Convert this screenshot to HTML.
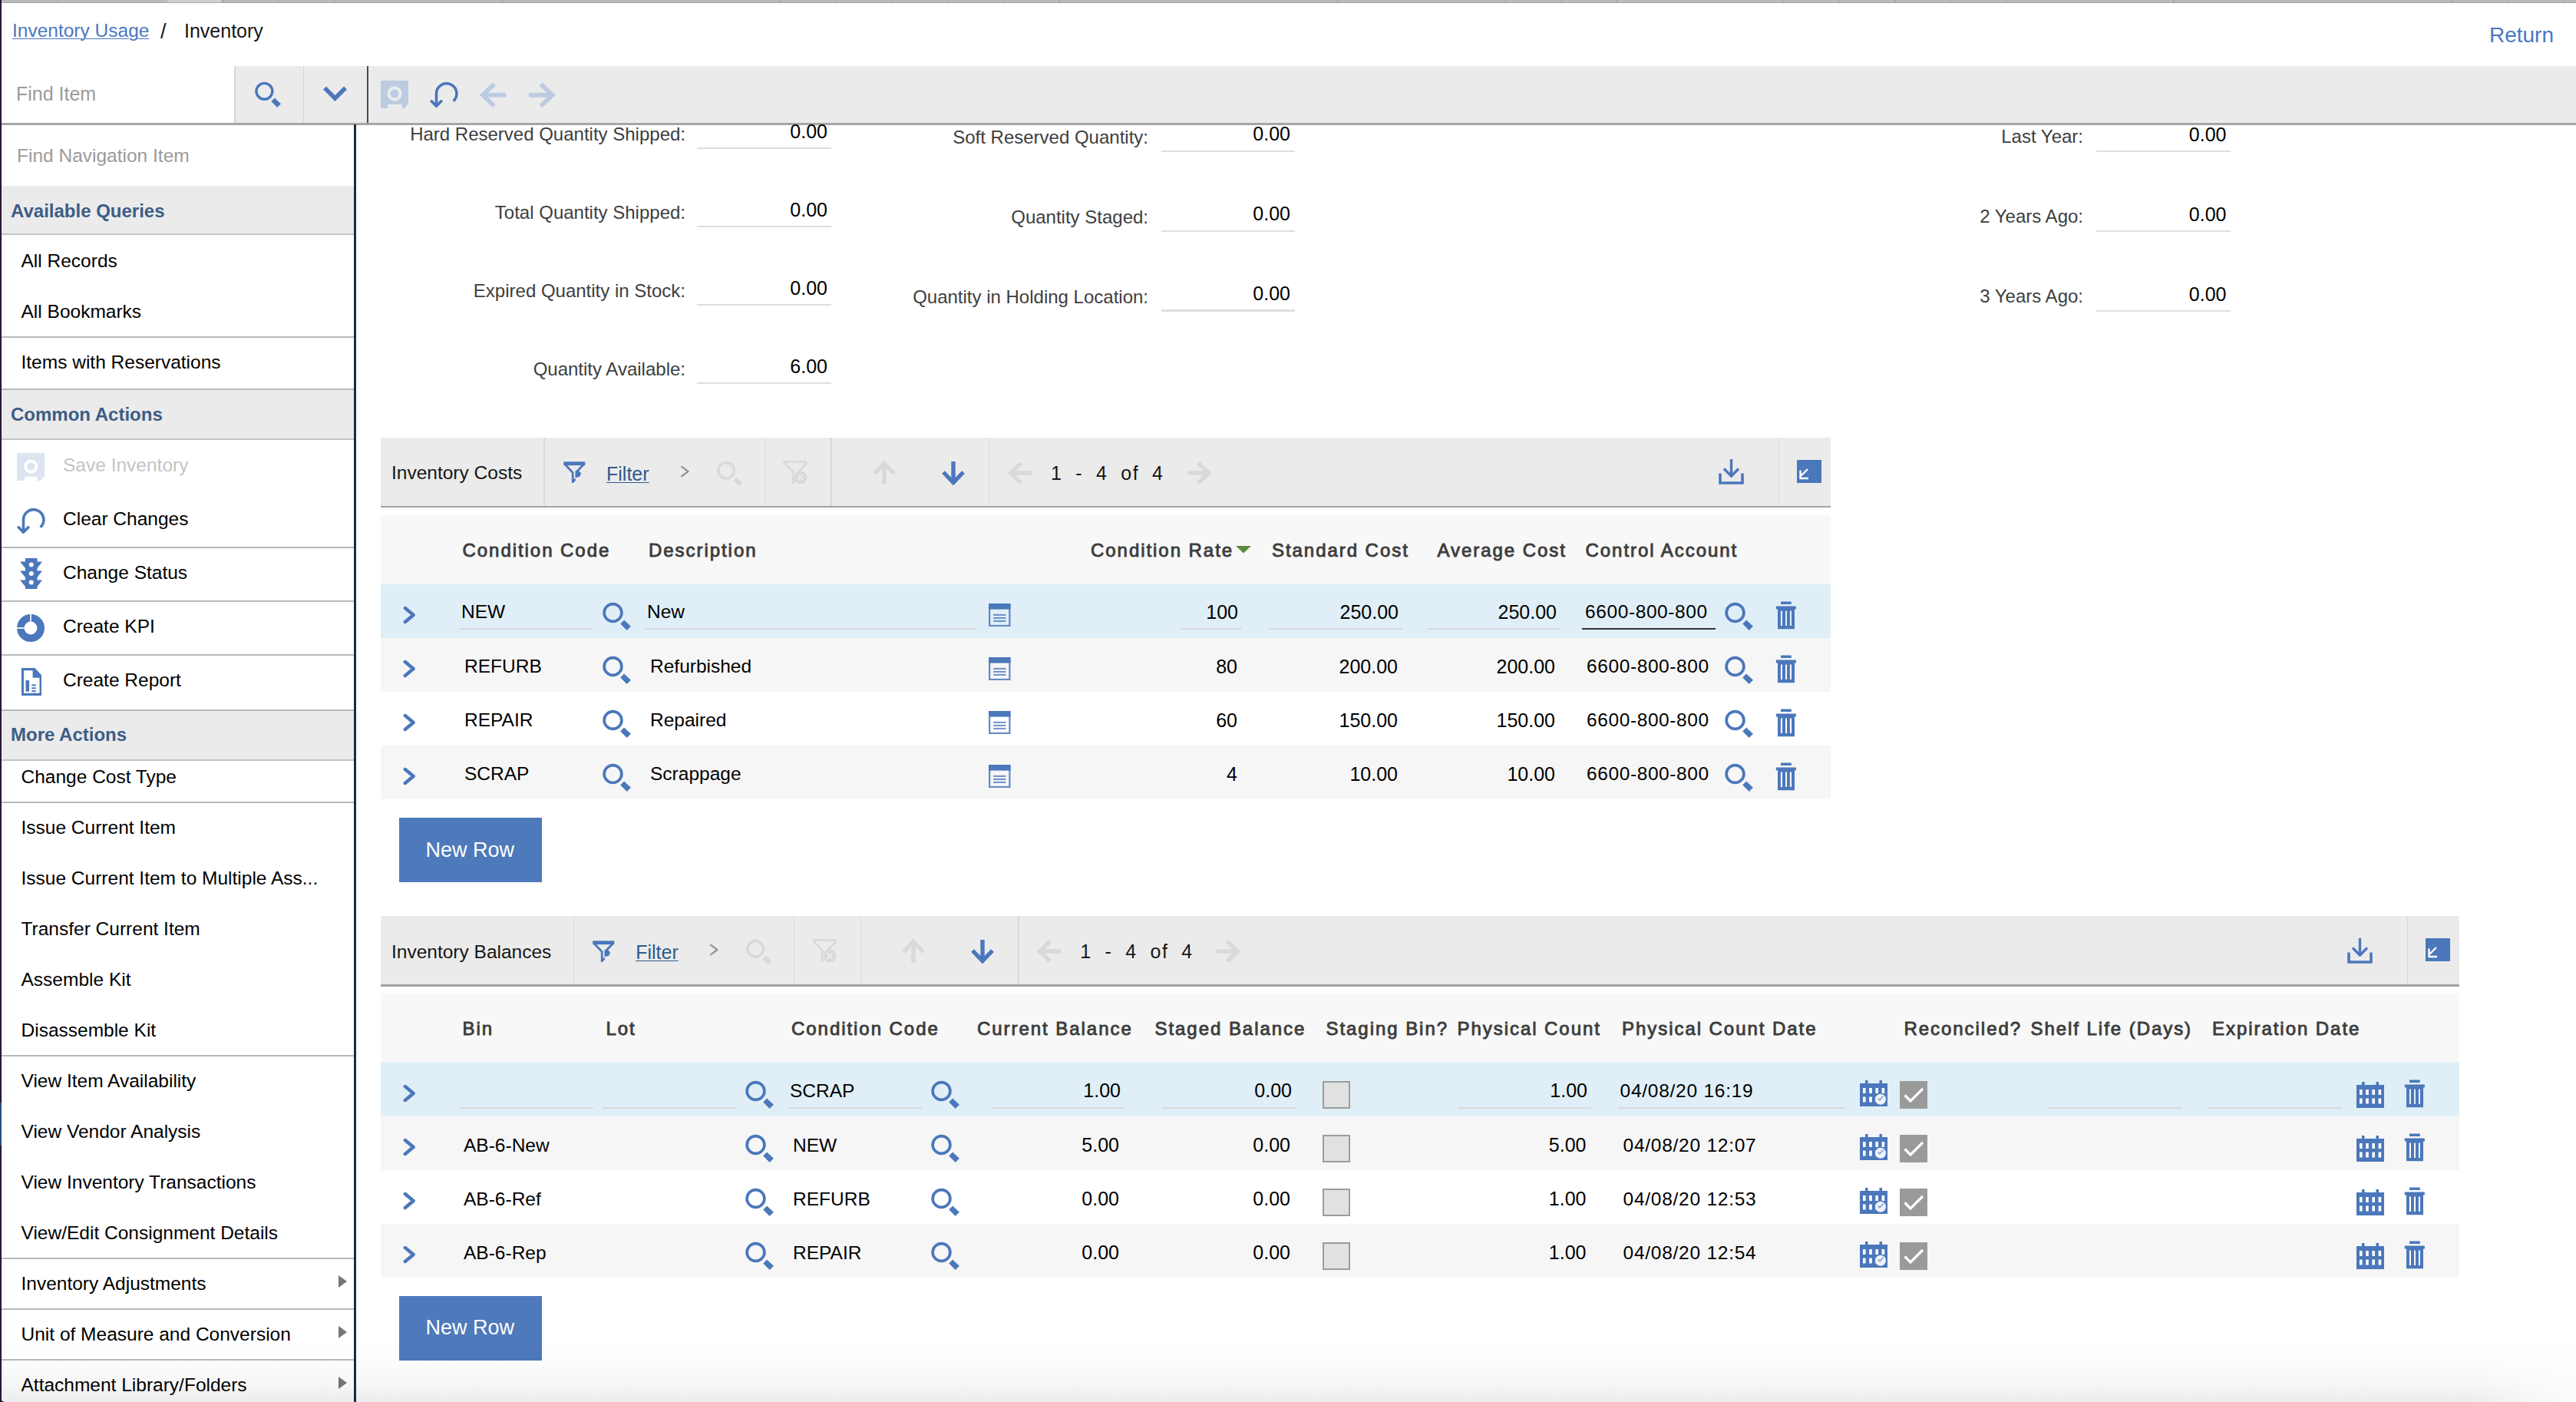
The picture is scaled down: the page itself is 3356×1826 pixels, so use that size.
<!DOCTYPE html><html><head><meta charset="utf-8"><style>
html,body{margin:0;padding:0;width:3356px;height:1826px;overflow:hidden;background:#fff;}
body{position:relative;font-family:"Liberation Sans",sans-serif;}
.t{position:absolute;white-space:nowrap;font-family:"Liberation Sans",sans-serif;}
.r{position:absolute;display:block;}
</style></head><body>
<div class="r" style="left:0.0px;top:0.0px;width:3356.0px;height:3.5px;background:#b9b9b9;"></div>
<div class="r" style="left:0.0px;top:2.6px;width:3356.0px;height:1.2px;background:#a9a9a9;"></div>
<div class="r" style="left:72.6px;top:0.0px;width:1.2px;height:3.0px;background:#a6a6a6;"></div>
<div class="r" style="left:145.2px;top:0.0px;width:1.2px;height:3.0px;background:#a6a6a6;"></div>
<div class="r" style="left:217.8px;top:0.0px;width:1.2px;height:3.0px;background:#a6a6a6;"></div>
<div class="r" style="left:290.4px;top:0.0px;width:1.2px;height:3.0px;background:#a6a6a6;"></div>
<div class="r" style="left:363.0px;top:0.0px;width:1.2px;height:3.0px;background:#a6a6a6;"></div>
<div class="r" style="left:435.6px;top:0.0px;width:1.2px;height:3.0px;background:#a6a6a6;"></div>
<div class="r" style="left:508.2px;top:0.0px;width:1.2px;height:3.0px;background:#a6a6a6;"></div>
<div class="r" style="left:580.8px;top:0.0px;width:1.2px;height:3.0px;background:#a6a6a6;"></div>
<div class="r" style="left:653.4px;top:0.0px;width:1.2px;height:3.0px;background:#a6a6a6;"></div>
<div class="r" style="left:726.0px;top:0.0px;width:1.2px;height:3.0px;background:#a6a6a6;"></div>
<div class="r" style="left:798.6px;top:0.0px;width:1.2px;height:3.0px;background:#a6a6a6;"></div>
<div class="r" style="left:871.2px;top:0.0px;width:1.2px;height:3.0px;background:#a6a6a6;"></div>
<div class="r" style="left:943.8px;top:0.0px;width:1.2px;height:3.0px;background:#a6a6a6;"></div>
<div class="r" style="left:1016.4px;top:0.0px;width:1.2px;height:3.0px;background:#a6a6a6;"></div>
<div class="r" style="left:1089.0px;top:0.0px;width:1.2px;height:3.0px;background:#a6a6a6;"></div>
<div class="r" style="left:1161.6px;top:0.0px;width:1.2px;height:3.0px;background:#a6a6a6;"></div>
<div class="r" style="left:1234.2px;top:0.0px;width:1.2px;height:3.0px;background:#a6a6a6;"></div>
<div class="r" style="left:1306.8px;top:0.0px;width:1.2px;height:3.0px;background:#a6a6a6;"></div>
<div class="r" style="left:1379.4px;top:0.0px;width:1.2px;height:3.0px;background:#a6a6a6;"></div>
<div class="r" style="left:1452.0px;top:0.0px;width:1.2px;height:3.0px;background:#a6a6a6;"></div>
<div class="r" style="left:1524.6px;top:0.0px;width:1.2px;height:3.0px;background:#a6a6a6;"></div>
<div class="r" style="left:1597.2px;top:0.0px;width:1.2px;height:3.0px;background:#a6a6a6;"></div>
<div class="r" style="left:1669.8px;top:0.0px;width:1.2px;height:3.0px;background:#a6a6a6;"></div>
<div class="r" style="left:1742.4px;top:0.0px;width:1.2px;height:3.0px;background:#a6a6a6;"></div>
<div class="r" style="left:1815.0px;top:0.0px;width:1.2px;height:3.0px;background:#a6a6a6;"></div>
<div class="r" style="left:1887.6px;top:0.0px;width:1.2px;height:3.0px;background:#a6a6a6;"></div>
<div class="r" style="left:1960.2px;top:0.0px;width:1.2px;height:3.0px;background:#a6a6a6;"></div>
<div class="r" style="left:2032.8px;top:0.0px;width:1.2px;height:3.0px;background:#a6a6a6;"></div>
<div class="r" style="left:2105.4px;top:0.0px;width:1.2px;height:3.0px;background:#a6a6a6;"></div>
<div class="r" style="left:2178.0px;top:0.0px;width:1.2px;height:3.0px;background:#a6a6a6;"></div>
<div class="r" style="left:2250.6px;top:0.0px;width:1.2px;height:3.0px;background:#a6a6a6;"></div>
<div class="r" style="left:2323.2px;top:0.0px;width:1.2px;height:3.0px;background:#a6a6a6;"></div>
<div class="r" style="left:2395.8px;top:0.0px;width:1.2px;height:3.0px;background:#a6a6a6;"></div>
<div class="r" style="left:2468.4px;top:0.0px;width:1.2px;height:3.0px;background:#a6a6a6;"></div>
<div class="r" style="left:2541.0px;top:0.0px;width:1.2px;height:3.0px;background:#a6a6a6;"></div>
<div class="r" style="left:2613.6px;top:0.0px;width:1.2px;height:3.0px;background:#a6a6a6;"></div>
<div class="r" style="left:2686.2px;top:0.0px;width:1.2px;height:3.0px;background:#a6a6a6;"></div>
<div class="r" style="left:2758.8px;top:0.0px;width:1.2px;height:3.0px;background:#a6a6a6;"></div>
<div class="r" style="left:2831.4px;top:0.0px;width:1.2px;height:3.0px;background:#a6a6a6;"></div>
<div class="r" style="left:2904.0px;top:0.0px;width:1.2px;height:3.0px;background:#a6a6a6;"></div>
<div class="r" style="left:2976.6px;top:0.0px;width:1.2px;height:3.0px;background:#a6a6a6;"></div>
<div class="r" style="left:3049.2px;top:0.0px;width:1.2px;height:3.0px;background:#a6a6a6;"></div>
<div class="r" style="left:3121.8px;top:0.0px;width:1.2px;height:3.0px;background:#a6a6a6;"></div>
<div class="r" style="left:3194.4px;top:0.0px;width:1.2px;height:3.0px;background:#a6a6a6;"></div>
<div class="r" style="left:3267.0px;top:0.0px;width:1.2px;height:3.0px;background:#a6a6a6;"></div>
<div class="r" style="left:3339.6px;top:0.0px;width:1.2px;height:3.0px;background:#a6a6a6;"></div>
<div class="r" style="left:218.0px;top:0.0px;width:70.0px;height:3.0px;background:#cfcfcf;"></div>
<div class="r" style="left:0.0px;top:0.0px;width:2.2px;height:1826.0px;background:#2a1634;"></div>
<div class="r" style="left:0.0px;top:1436.0px;width:2.2px;height:56.0px;background:#2a4d78;"></div>
<div class="t" style="top:28.3px;font-size:24.5px;line-height:24.5px;color:#4a77bf;left:16.0px;text-decoration:underline;text-underline-offset:2px;text-decoration-thickness:1.2px;">Inventory Usage</div>
<div class="t" style="top:27.6px;font-size:27px;line-height:27px;color:#161616;left:209.0px;">/</div>
<div class="t" style="top:27.8px;font-size:25px;line-height:25px;color:#161616;left:240.0px;">Inventory</div>
<div class="t" style="top:32.3px;font-size:28px;line-height:28px;color:#4a77bf;right:29.0px;">Return</div>
<div class="r" style="left:305.0px;top:86.0px;width:3051.0px;height:74.5px;background:#ebebeb;"></div>
<div class="r" style="left:2.2px;top:160.0px;width:3353.8px;height:2.5px;background:#a6a6a6;"></div>
<div class="r" style="left:305.0px;top:86.0px;width:1.5px;height:74.0px;background:#d6d6d6;"></div>
<div class="r" style="left:394.5px;top:86.0px;width:1.3px;height:74.0px;background:#d6d6d6;"></div>
<div class="r" style="left:477.8px;top:86.0px;width:2.4px;height:74.0px;background:#4a4a4a;"></div>
<div class="t" style="top:109.8px;font-size:25px;line-height:25px;color:#9b9b9b;left:21.0px;">Find Item</div>
<svg class="r" style="left:331.5px;top:106.3px;" width="34.9" height="34.9" viewBox="0 0 38 38" preserveAspectRatio="none"><circle cx="13.5" cy="14" r="11.4" fill="none" stroke="#4b77bb" stroke-width="3.7"/><path d="M23.7 28.4 L28.1 23.9 L36.5 31.8 L31.7 36.6 Z" fill="#4b77bb" stroke="#4b77bb" stroke-width="0.8" stroke-linejoin="round"/></svg>
<svg class="r" style="left:420.0px;top:111.0px;" width="33.0" height="22.0" viewBox="0 0 33 22" preserveAspectRatio="none"><path d="M3 3.5 L16.5 17 L30 3.5" fill="none" stroke="#4b77bb" stroke-width="5.5"/></svg>
<svg class="r" style="left:496.0px;top:105.0px;" width="36.0" height="36.0" viewBox="0 0 36 36" preserveAspectRatio="none"><path d="M0 0 H36 V30 L30.5 36 H28 V31 H9 V36 H0 Z" fill="#bccbe0"/><circle cx="18" cy="17" r="7.5" fill="none" stroke="#ebebeb" stroke-width="4"/></svg>
<svg class="r" style="left:559.6px;top:106.5px;" width="38.0" height="34.0" viewBox="0 0 38 34" preserveAspectRatio="none"><path d="M30.6 24.7 A13.2 13.2 0 1 0 8.5 15 V31" fill="none" stroke="#4b77bb" stroke-width="3.6"/><path d="M2.2 24.8 L8.5 31.2 L14.8 24.8" fill="none" stroke="#4b77bb" stroke-width="3.6" stroke-linejoin="round" stroke-linecap="round"/></svg>
<svg class="r" style="left:624.5px;top:105.5px;" width="35.5" height="35.5" viewBox="0 0 32 32" preserveAspectRatio="none"><g transform="rotate(90 16 16)"><rect x="13.4" y="1" width="5.2" height="26" fill="#bccbe0"/><path d="M3 15 L16 28.5 L29 15" fill="none" stroke="#bccbe0" stroke-width="5.2"/></g></svg>
<svg class="r" style="left:688.0px;top:105.5px;" width="35.5" height="35.5" viewBox="0 0 32 32" preserveAspectRatio="none"><g transform="rotate(-90 16 16)"><rect x="13.4" y="1" width="5.2" height="26" fill="#bccbe0"/><path d="M3 15 L16 28.5 L29 15" fill="none" stroke="#bccbe0" stroke-width="5.2"/></g></svg>
<div class="r" style="left:460.8px;top:162.0px;width:3.0px;height:1664.0px;background:#1d2a44;"></div>
<div class="t" style="top:191.3px;font-size:24.5px;line-height:24.5px;color:#9b9b9b;left:22.0px;">Find Navigation Item</div>
<div class="r" style="left:2.2px;top:242.0px;width:458.6px;height:62.0px;background:#ebebeb;"></div>
<div class="r" style="left:2.2px;top:304.0px;width:458.6px;height:2.0px;background:#c4c4c4;"></div>
<div class="t" style="top:262.7px;font-size:24px;line-height:24px;color:#3c5d86;font-weight:700;left:14.0px;">Available Queries</div>
<div class="t" style="top:328.3px;font-size:24.5px;line-height:24.5px;color:#000;left:27.5px;">All Records</div>
<div class="t" style="top:394.3px;font-size:24.5px;line-height:24.5px;color:#000;left:27.5px;">All Bookmarks</div>
<div class="r" style="left:2.2px;top:438.0px;width:458.6px;height:2.0px;background:#b9b9b9;"></div>
<div class="t" style="top:460.3px;font-size:24.5px;line-height:24.5px;color:#000;left:27.5px;">Items with Reservations</div>
<div class="r" style="left:2.2px;top:505.5px;width:458.6px;height:2.0px;background:#b9b9b9;"></div>
<div class="r" style="left:2.2px;top:507.5px;width:458.6px;height:63.0px;background:#ebebeb;"></div>
<div class="r" style="left:2.2px;top:570.5px;width:458.6px;height:2.0px;background:#c4c4c4;"></div>
<div class="t" style="top:527.7px;font-size:24px;line-height:24px;color:#3c5d86;font-weight:700;left:14.0px;">Common Actions</div>
<div class="t" style="top:594.3px;font-size:24.5px;line-height:24.5px;color:#c4c4c4;left:82.0px;">Save Inventory</div>
<div class="t" style="top:664.3px;font-size:24.5px;line-height:24.5px;color:#000;left:82.0px;">Clear Changes</div>
<div class="r" style="left:2.2px;top:712.0px;width:458.6px;height:2.0px;background:#b9b9b9;"></div>
<div class="t" style="top:734.3px;font-size:24.5px;line-height:24.5px;color:#000;left:82.0px;">Change Status</div>
<div class="r" style="left:2.2px;top:782.0px;width:458.6px;height:2.0px;background:#b9b9b9;"></div>
<div class="t" style="top:803.8px;font-size:24.5px;line-height:24.5px;color:#000;left:82.0px;">Create KPI</div>
<div class="r" style="left:2.2px;top:852.0px;width:458.6px;height:2.0px;background:#b9b9b9;"></div>
<div class="t" style="top:874.3px;font-size:24.5px;line-height:24.5px;color:#000;left:82.0px;">Create Report</div>
<div class="r" style="left:2.2px;top:923.5px;width:458.6px;height:2.0px;background:#b9b9b9;"></div>
<div class="r" style="left:2.2px;top:925.5px;width:458.6px;height:63.0px;background:#ebebeb;"></div>
<div class="r" style="left:2.2px;top:988.5px;width:458.6px;height:2.0px;background:#c4c4c4;"></div>
<div class="t" style="top:945.2px;font-size:24px;line-height:24px;color:#3c5d86;font-weight:700;left:14.0px;">More Actions</div>
<div class="t" style="top:1000.3px;font-size:24.5px;line-height:24.5px;color:#000;left:27.5px;">Change Cost Type</div>
<div class="r" style="left:2.2px;top:1044.0px;width:458.6px;height:2.0px;background:#b9b9b9;"></div>
<div class="t" style="top:1066.3px;font-size:24.5px;line-height:24.5px;color:#000;left:27.5px;">Issue Current Item</div>
<div class="t" style="top:1132.2px;font-size:24.5px;line-height:24.5px;color:#000;left:27.5px;">Issue Current Item to Multiple Ass...</div>
<div class="t" style="top:1198.1px;font-size:24.5px;line-height:24.5px;color:#000;left:27.5px;">Transfer Current Item</div>
<div class="t" style="top:1264.0px;font-size:24.5px;line-height:24.5px;color:#000;left:27.5px;">Assemble Kit</div>
<div class="t" style="top:1329.9px;font-size:24.5px;line-height:24.5px;color:#000;left:27.5px;">Disassemble Kit</div>
<div class="r" style="left:2.2px;top:1374.0px;width:458.6px;height:2.0px;background:#b9b9b9;"></div>
<div class="t" style="top:1396.3px;font-size:24.5px;line-height:24.5px;color:#000;left:27.5px;">View Item Availability</div>
<div class="t" style="top:1462.3px;font-size:24.5px;line-height:24.5px;color:#000;left:27.5px;">View Vendor Analysis</div>
<div class="t" style="top:1528.3px;font-size:24.5px;line-height:24.5px;color:#000;left:27.5px;">View Inventory Transactions</div>
<div class="t" style="top:1594.3px;font-size:24.5px;line-height:24.5px;color:#000;left:27.5px;">View/Edit Consignment Details</div>
<div class="r" style="left:2.2px;top:1637.7px;width:458.6px;height:2.0px;background:#b9b9b9;"></div>
<div class="t" style="top:1660.3px;font-size:24.5px;line-height:24.5px;color:#000;left:27.5px;">Inventory Adjustments</div>
<div class="r" style="left:2.2px;top:1704.0px;width:458.6px;height:2.0px;background:#b9b9b9;"></div>
<div class="t" style="top:1726.3px;font-size:24.5px;line-height:24.5px;color:#000;left:27.5px;">Unit of Measure and Conversion</div>
<div class="r" style="left:2.2px;top:1769.5px;width:458.6px;height:2.0px;background:#b9b9b9;"></div>
<div class="t" style="top:1791.9px;font-size:24.5px;line-height:24.5px;color:#000;left:27.5px;">Attachment Library/Folders</div>
<svg class="r" style="left:441.0px;top:1661.0px;" width="11.0" height="16.0" viewBox="0 0 11 16" preserveAspectRatio="none"><path d="M0 0 L11 8 L0 16 Z" fill="#777"/></svg>
<svg class="r" style="left:441.0px;top:1727.0px;" width="11.0" height="16.0" viewBox="0 0 11 16" preserveAspectRatio="none"><path d="M0 0 L11 8 L0 16 Z" fill="#777"/></svg>
<svg class="r" style="left:441.0px;top:1792.6px;" width="11.0" height="16.0" viewBox="0 0 11 16" preserveAspectRatio="none"><path d="M0 0 L11 8 L0 16 Z" fill="#777"/></svg>
<svg class="r" style="left:21.5px;top:590.0px;" width="36.5" height="36.0" viewBox="0 0 36 36" preserveAspectRatio="none"><path d="M0 0 H36 V30 L30.5 36 H26 V31 H10 V36 H0 Z" fill="#dce5f1"/><circle cx="18" cy="17.5" r="7" fill="none" stroke="#fff" stroke-width="4"/></svg>
<svg class="r" style="left:21.5px;top:661.5px;" width="38.0" height="34.0" viewBox="0 0 38 34" preserveAspectRatio="none"><path d="M30.6 24.7 A13.2 13.2 0 1 0 8.5 15 V31" fill="none" stroke="#4b77bb" stroke-width="3.6"/><path d="M2.2 24.8 L8.5 31.2 L14.8 24.8" fill="none" stroke="#4b77bb" stroke-width="3.6" stroke-linejoin="round" stroke-linecap="round"/></svg>
<svg class="r" style="left:25.5px;top:727.0px;" width="29.0" height="40.0" viewBox="0 0 29 40" preserveAspectRatio="none"><rect x="7" y="0" width="15.5" height="40" fill="#4b77bb"/><path d="M0 4.5 H8 V13 H7 Z M29 4.5 H21.5 V13 H22.5 Z M0 16.5 H8 V25 H7 Z M29 16.5 H21.5 V25 H22.5 Z M0 28.5 H8 V37 H7 Z M29 28.5 H21.5 V37 H22.5 Z" fill="#4b77bb"/><circle cx="14.75" cy="8.5" r="3" fill="#fff"/><circle cx="14.75" cy="20" r="3" fill="#fff"/><circle cx="14.75" cy="31.5" r="3" fill="#fff"/></svg>
<svg class="r" style="left:21.5px;top:800.0px;" width="36.0" height="36.0" viewBox="0 0 36 36" preserveAspectRatio="none"><circle cx="18" cy="18" r="13.2" fill="none" stroke="#4b77bb" stroke-width="9.6"/><rect x="17" y="0" width="2" height="10" fill="#dfe7f2"/><rect x="0" y="17" width="10" height="2" fill="#dfe7f2"/></svg>
<svg class="r" style="left:27.9px;top:869.7px;" width="26.5" height="36.0" viewBox="0 0 29 37" preserveAspectRatio="none"><path d="M1.5 1.5 H18 L27.5 11 V35.5 H1.5 Z" fill="none" stroke="#4b77bb" stroke-width="3.5"/><path d="M16 1.5 V13 H27.5 L16 1.5 Z" fill="#4b77bb"/><rect x="6" y="16.5" width="5" height="15" fill="#4b77bb"/><rect x="14.5" y="22" width="6" height="2" fill="#4b77bb"/><rect x="14.5" y="26" width="6" height="2" fill="#4b77bb"/><rect x="14.5" y="30" width="6" height="2" fill="#4b77bb"/></svg>
<div class="t" style="top:163.1px;font-size:24px;line-height:24px;color:#3e3e3e;right:2463.0px;">Hard Reserved Quantity Shipped:</div>
<div class="t" style="top:159.3px;font-size:25px;line-height:25px;color:#000;right:2278.0px;">0.00</div>
<div class="r" style="left:908.0px;top:192.0px;width:175.0px;height:2.2px;background:#dedede;"></div>
<div class="t" style="top:265.0px;font-size:24px;line-height:24px;color:#3e3e3e;right:2463.0px;">Total Quantity Shipped:</div>
<div class="t" style="top:261.2px;font-size:25px;line-height:25px;color:#000;right:2278.0px;">0.00</div>
<div class="r" style="left:908.0px;top:293.9px;width:175.0px;height:2.2px;background:#dedede;"></div>
<div class="t" style="top:366.9px;font-size:24px;line-height:24px;color:#3e3e3e;right:2463.0px;">Expired Quantity in Stock:</div>
<div class="t" style="top:363.1px;font-size:25px;line-height:25px;color:#000;right:2278.0px;">0.00</div>
<div class="r" style="left:908.0px;top:395.8px;width:175.0px;height:2.2px;background:#dedede;"></div>
<div class="t" style="top:468.8px;font-size:24px;line-height:24px;color:#3e3e3e;right:2463.0px;">Quantity Available:</div>
<div class="t" style="top:465.0px;font-size:25px;line-height:25px;color:#000;right:2278.0px;">6.00</div>
<div class="r" style="left:908.0px;top:497.7px;width:175.0px;height:2.2px;background:#dedede;"></div>
<div class="t" style="top:166.7px;font-size:24px;line-height:24px;color:#3e3e3e;right:1860.0px;">Soft Reserved Quantity:</div>
<div class="t" style="top:162.3px;font-size:25px;line-height:25px;color:#000;right:1675.0px;">0.00</div>
<div class="r" style="left:1513.0px;top:195.6px;width:174.0px;height:2.2px;background:#dedede;"></div>
<div class="t" style="top:270.6px;font-size:24px;line-height:24px;color:#3e3e3e;right:1860.0px;">Quantity Staged:</div>
<div class="t" style="top:266.2px;font-size:25px;line-height:25px;color:#000;right:1675.0px;">0.00</div>
<div class="r" style="left:1513.0px;top:299.5px;width:174.0px;height:2.2px;background:#dedede;"></div>
<div class="t" style="top:374.5px;font-size:24px;line-height:24px;color:#3e3e3e;right:1860.0px;">Quantity in Holding Location:</div>
<div class="t" style="top:370.1px;font-size:25px;line-height:25px;color:#000;right:1675.0px;">0.00</div>
<div class="r" style="left:1513.0px;top:403.4px;width:174.0px;height:2.2px;background:#dedede;"></div>
<div class="t" style="top:166.3px;font-size:24px;line-height:24px;color:#3e3e3e;right:642.0px;">Last Year:</div>
<div class="t" style="top:162.8px;font-size:25px;line-height:25px;color:#000;right:455.5px;">0.00</div>
<div class="r" style="left:2731.0px;top:195.8px;width:175.0px;height:2.2px;background:#dedede;"></div>
<div class="t" style="top:270.3px;font-size:24px;line-height:24px;color:#3e3e3e;right:642.0px;">2 Years Ago:</div>
<div class="t" style="top:266.8px;font-size:25px;line-height:25px;color:#000;right:455.5px;">0.00</div>
<div class="r" style="left:2731.0px;top:299.8px;width:175.0px;height:2.2px;background:#dedede;"></div>
<div class="t" style="top:374.3px;font-size:24px;line-height:24px;color:#3e3e3e;right:642.0px;">3 Years Ago:</div>
<div class="t" style="top:370.8px;font-size:25px;line-height:25px;color:#000;right:455.5px;">0.00</div>
<div class="r" style="left:2731.0px;top:403.8px;width:175.0px;height:2.2px;background:#dedede;"></div>
<div class="r" style="left:496.0px;top:569.8px;width:1889.0px;height:90.0px;background:#ebebeb;"></div>
<div class="r" style="left:496.0px;top:658.8px;width:1889.0px;height:2.5px;background:#a3a3a3;"></div>
<div class="t" style="top:604.3px;font-size:24.5px;line-height:24.5px;color:#161616;left:510.0px;">Inventory Costs</div>
<div class="r" style="left:708.4px;top:569.8px;width:1.2px;height:89.0px;background:#d9d9d9;"></div>
<svg class="r" style="left:734.0px;top:601.3px;" width="29.0" height="28.0" viewBox="0 0 29 28" preserveAspectRatio="none"><rect x="0.3" y="0.3" width="28" height="4.8" fill="#4b77bb"/><path d="M1.8 3.5 L12.2 14.5 V26.8 L15.5 23 M26.8 3.5 L17.2 13.5" fill="none" stroke="#4b77bb" stroke-width="2.7"/><path d="M15.5 12.3 H20 L23 15.3 L21.5 19.5 L15.5 21.5 Z" fill="#4b77bb"/></svg>
<div class="t" style="top:604.6px;font-size:25px;line-height:25px;color:#2f5b8c;left:790.0px;text-decoration:underline;text-underline-offset:1.8px;text-decoration-thickness:1.2px;">Filter</div>
<svg class="r" style="left:886.0px;top:605.8px;" width="13.0" height="16.0" viewBox="0 0 13 16" preserveAspectRatio="none"><path d="M2.2 1.8 L10.5 8 L2.2 14.2" fill="none" stroke="#96968a" stroke-width="2.3" stroke-linecap="round" stroke-linejoin="round"/></svg>
<svg class="r" style="left:933.5px;top:599.8px;" width="34.4" height="34.4" viewBox="0 0 38 38" preserveAspectRatio="none"><circle cx="13.5" cy="14" r="11.4" fill="none" stroke="#d9d9d9" stroke-width="3.7"/><path d="M23.7 28.4 L28.1 23.9 L36.5 31.8 L31.7 36.6 Z" fill="#d9d9d9" stroke="#d9d9d9" stroke-width="0.8" stroke-linejoin="round"/></svg>
<div class="r" style="left:996.0px;top:569.8px;width:1.2px;height:89.0px;background:#d9d9d9;"></div>
<svg class="r" style="left:1020.0px;top:599.8px;" width="32.0" height="31.0" viewBox="0 0 32 31" preserveAspectRatio="none"><path d="M1 1.5 H30 V4.5 L20.5 14 V17 L13 29 V14 L3 4.5 Z" fill="none" stroke="#d9d9d9" stroke-width="2.6"/><circle cx="23" cy="22" r="8.5" fill="#d9d9d9"/><path d="M19.5 18.5 L26.5 25.5 M26.5 18.5 L19.5 25.5" stroke="#ececec" stroke-width="2"/></svg>
<div class="r" style="left:1082.4px;top:569.8px;width:1.2px;height:89.0px;background:#d9d9d9;"></div>
<svg class="r" style="left:1136.0px;top:599.8px;" width="32.0" height="32.0" viewBox="0 0 32 32" preserveAspectRatio="none"><g transform="rotate(180 16 16)"><rect x="13.3" y="1" width="5.4" height="26" fill="#d9d9d9"/><path d="M3 15 L16 28.5 L29 15" fill="none" stroke="#d9d9d9" stroke-width="5.4"/></g></svg>
<svg class="r" style="left:1226.0px;top:599.8px;" width="32.0" height="32.0" viewBox="0 0 32 32" preserveAspectRatio="none"><g transform="rotate(0 16 16)"><rect x="13.3" y="1" width="5.4" height="26" fill="#4b77bb"/><path d="M3 15 L16 28.5 L29 15" fill="none" stroke="#4b77bb" stroke-width="5.4"/></g></svg>
<div class="r" style="left:1288.2px;top:569.8px;width:1.2px;height:89.0px;background:#d9d9d9;"></div>
<svg class="r" style="left:1312.5px;top:599.8px;" width="32.0" height="32.0" viewBox="0 0 32 32" preserveAspectRatio="none"><g transform="rotate(90 16 16)"><rect x="13.3" y="1" width="5.4" height="26" fill="#d9d9d9"/><path d="M3 15 L16 28.5 L29 15" fill="none" stroke="#d9d9d9" stroke-width="5.4"/></g></svg>
<div class="t" style="top:604.1px;font-size:25px;line-height:25px;color:#161616;letter-spacing:1.5px;left:1369.0px;">1&nbsp;&nbsp;-&nbsp;&nbsp;4&nbsp;&nbsp;of&nbsp;&nbsp;4</div>
<svg class="r" style="left:1546.0px;top:599.8px;" width="32.0" height="32.0" viewBox="0 0 32 32" preserveAspectRatio="none"><g transform="rotate(-90 16 16)"><rect x="13.3" y="1" width="5.4" height="26" fill="#d9d9d9"/><path d="M3 15 L16 28.5 L29 15" fill="none" stroke="#d9d9d9" stroke-width="5.4"/></g></svg>
<svg class="r" style="left:2238.5px;top:598.4px;" width="33.0" height="33.0" viewBox="0 0 33 33" preserveAspectRatio="none"><rect x="14.8" y="0" width="3.4" height="21" fill="#4b77bb"/><path d="M7 12.5 L16.5 22 L26 12.5" fill="none" stroke="#4b77bb" stroke-width="3.4"/><path d="M2 18.5 V31 H31 V18.5" fill="none" stroke="#4b77bb" stroke-width="3.6"/></svg>
<div class="r" style="left:2317.1px;top:569.8px;width:1.2px;height:89.0px;background:#d9d9d9;"></div>
<svg class="r" style="left:2340.8px;top:599.0px;" width="32.0" height="30.0" viewBox="0 0 32 30" preserveAspectRatio="none"><rect x="0" y="0" width="32" height="30" fill="#4b77bb"/><path d="M14 12 L5.5 20.5 M4.5 13.5 V24 H15" fill="none" stroke="#fff" stroke-width="2.4"/></svg>
<div class="r" style="left:496.0px;top:670.6px;width:1889.0px;height:90.2px;background:#f8f8f8;"></div>
<div class="t" style="top:705.1px;font-size:24px;line-height:24px;color:#3d3d3d;letter-spacing:1.95px;left:602.5px;-webkit-text-stroke:0.9px #3d3d3d;">Condition Code</div>
<div class="t" style="top:705.1px;font-size:24px;line-height:24px;color:#3d3d3d;letter-spacing:1.95px;left:845.0px;-webkit-text-stroke:0.9px #3d3d3d;">Description</div>
<div class="t" style="top:705.1px;font-size:24px;line-height:24px;color:#3d3d3d;letter-spacing:1.95px;left:1421.0px;-webkit-text-stroke:0.9px #3d3d3d;">Condition Rate</div>
<svg class="r" style="left:1609.5px;top:711.4px;" width="20.0" height="9.5" viewBox="0 0 20 9.5" preserveAspectRatio="none"><path d="M0 0 H20 L10 9.5 Z" fill="#5b8c3e"/></svg>
<div class="t" style="top:705.1px;font-size:24px;line-height:24px;color:#3d3d3d;letter-spacing:1.95px;left:1657.0px;-webkit-text-stroke:0.9px #3d3d3d;">Standard Cost</div>
<div class="t" style="top:705.1px;font-size:24px;line-height:24px;color:#3d3d3d;letter-spacing:1.95px;left:1872.5px;-webkit-text-stroke:0.9px #3d3d3d;">Average Cost</div>
<div class="t" style="top:705.1px;font-size:24px;line-height:24px;color:#3d3d3d;letter-spacing:1.95px;left:2065.5px;-webkit-text-stroke:0.9px #3d3d3d;">Control Account</div>
<div class="r" style="left:496.0px;top:760.8px;width:1889.0px;height:70.1px;background:#e0eff7;"></div>
<svg class="r" style="left:525.0px;top:789.3px;" width="17.0" height="24.0" viewBox="0 0 17 24" preserveAspectRatio="none"><path d="M2.8 3 L13.6 12 L2.8 21" fill="none" stroke="#4b77bb" stroke-width="4.4" stroke-linecap="round" stroke-linejoin="round"/></svg>
<div class="t" style="top:785.1px;font-size:24.5px;line-height:24.5px;color:#000;left:601.0px;">NEW</div>
<svg class="r" style="left:784.5px;top:783.8px;" width="38.0" height="38.0" viewBox="0 0 38 38" preserveAspectRatio="none"><circle cx="13.5" cy="14" r="11.4" fill="none" stroke="#4b77bb" stroke-width="3.7"/><path d="M23.7 28.4 L28.1 23.9 L36.5 31.8 L31.7 36.6 Z" fill="#4b77bb" stroke="#4b77bb" stroke-width="0.8" stroke-linejoin="round"/></svg>
<div class="t" style="top:785.1px;font-size:24.5px;line-height:24.5px;color:#000;left:843.0px;">New</div>
<svg class="r" style="left:1288.0px;top:786.3px;" width="28.5" height="30.0" viewBox="0 0 28 30" preserveAspectRatio="none"><rect x="1.1" y="1" width="25.8" height="28" fill="none" stroke="#4b77bb" stroke-opacity="0.85" stroke-width="2.2"/><rect x="0" y="0" width="28" height="7.6" fill="#4b77bb"/><rect x="6" y="13.9" width="16" height="2" fill="#4b77bb" fill-opacity="0.8"/><rect x="6" y="17.9" width="16" height="2" fill="#4b77bb" fill-opacity="0.8"/><rect x="6" y="21.9" width="16" height="2" fill="#4b77bb" fill-opacity="0.8"/></svg>
<div class="t" style="top:784.6px;font-size:25px;line-height:25px;color:#000;right:1743.0px;">100</div>
<div class="t" style="top:784.6px;font-size:25px;line-height:25px;color:#000;right:1534.0px;">250.00</div>
<div class="t" style="top:784.6px;font-size:25px;line-height:25px;color:#000;right:1328.0px;">250.00</div>
<div class="t" style="top:785.1px;font-size:24.5px;line-height:24.5px;color:#000;letter-spacing:0.6px;left:2065.0px;">6600-800-800</div>
<svg class="r" style="left:2246.5px;top:783.8px;" width="38.0" height="38.0" viewBox="0 0 38 38" preserveAspectRatio="none"><circle cx="13.5" cy="14" r="11.4" fill="none" stroke="#4b77bb" stroke-width="3.7"/><path d="M23.7 28.4 L28.1 23.9 L36.5 31.8 L31.7 36.6 Z" fill="#4b77bb" stroke="#4b77bb" stroke-width="0.8" stroke-linejoin="round"/></svg>
<svg class="r" style="left:2312.5px;top:783.3px;" width="28.0" height="37.0" viewBox="0 0 28 37" preserveAspectRatio="none"><rect x="7" y="0.5" width="13.8" height="3.6" rx="0.6" fill="#4b77bb"/><rect x="0.8" y="6.6" width="26.1" height="3.8" rx="0.6" fill="#4b77bb"/><path fill-rule="evenodd" d="M3 10 H25 V36.2 H3 Z M6.9 12.5 V32.1 H9 V12.5 Z M13 12.5 V32.1 H15 V12.5 Z M18.9 12.5 V32.1 H21 V12.5 Z" fill="#4b77bb"/></svg>
<div class="r" style="left:598.0px;top:817.6px;width:175.0px;height:2.3px;background:#d9d9d9;"></div>
<div class="r" style="left:840.0px;top:817.6px;width:431.0px;height:2.3px;background:#d9d9d9;"></div>
<div class="r" style="left:1539.0px;top:817.6px;width:79.0px;height:2.3px;background:#d9d9d9;"></div>
<div class="r" style="left:1653.0px;top:817.6px;width:174.0px;height:2.3px;background:#d9d9d9;"></div>
<div class="r" style="left:1859.0px;top:817.6px;width:174.0px;height:2.3px;background:#d9d9d9;"></div>
<div class="r" style="left:2061.0px;top:817.6px;width:174.0px;height:2.0px;background:#333;"></div>
<div class="r" style="left:496.0px;top:830.8px;width:1889.0px;height:70.1px;background:#f6f6f6;"></div>
<svg class="r" style="left:525.0px;top:859.3px;" width="17.0" height="24.0" viewBox="0 0 17 24" preserveAspectRatio="none"><path d="M2.8 3 L13.6 12 L2.8 21" fill="none" stroke="#4b77bb" stroke-width="4.4" stroke-linecap="round" stroke-linejoin="round"/></svg>
<div class="t" style="top:856.3px;font-size:24.5px;line-height:24.5px;color:#000;left:605.0px;">REFURB</div>
<svg class="r" style="left:784.5px;top:853.8px;" width="38.0" height="38.0" viewBox="0 0 38 38" preserveAspectRatio="none"><circle cx="13.5" cy="14" r="11.4" fill="none" stroke="#4b77bb" stroke-width="3.7"/><path d="M23.7 28.4 L28.1 23.9 L36.5 31.8 L31.7 36.6 Z" fill="#4b77bb" stroke="#4b77bb" stroke-width="0.8" stroke-linejoin="round"/></svg>
<div class="t" style="top:856.3px;font-size:24.5px;line-height:24.5px;color:#000;left:847.0px;">Refurbished</div>
<svg class="r" style="left:1288.0px;top:856.3px;" width="28.5" height="30.0" viewBox="0 0 28 30" preserveAspectRatio="none"><rect x="1.1" y="1" width="25.8" height="28" fill="none" stroke="#4b77bb" stroke-opacity="0.85" stroke-width="2.2"/><rect x="0" y="0" width="28" height="7.6" fill="#4b77bb"/><rect x="6" y="13.9" width="16" height="2" fill="#4b77bb" fill-opacity="0.8"/><rect x="6" y="17.9" width="16" height="2" fill="#4b77bb" fill-opacity="0.8"/><rect x="6" y="21.9" width="16" height="2" fill="#4b77bb" fill-opacity="0.8"/></svg>
<div class="t" style="top:855.8px;font-size:25px;line-height:25px;color:#000;right:1744.0px;">80</div>
<div class="t" style="top:855.8px;font-size:25px;line-height:25px;color:#000;right:1535.0px;">200.00</div>
<div class="t" style="top:855.8px;font-size:25px;line-height:25px;color:#000;right:1330.0px;">200.00</div>
<div class="t" style="top:856.3px;font-size:24.5px;line-height:24.5px;color:#000;letter-spacing:0.6px;left:2067.0px;">6600-800-800</div>
<svg class="r" style="left:2246.5px;top:853.8px;" width="38.0" height="38.0" viewBox="0 0 38 38" preserveAspectRatio="none"><circle cx="13.5" cy="14" r="11.4" fill="none" stroke="#4b77bb" stroke-width="3.7"/><path d="M23.7 28.4 L28.1 23.9 L36.5 31.8 L31.7 36.6 Z" fill="#4b77bb" stroke="#4b77bb" stroke-width="0.8" stroke-linejoin="round"/></svg>
<svg class="r" style="left:2312.5px;top:853.3px;" width="28.0" height="37.0" viewBox="0 0 28 37" preserveAspectRatio="none"><rect x="7" y="0.5" width="13.8" height="3.6" rx="0.6" fill="#4b77bb"/><rect x="0.8" y="6.6" width="26.1" height="3.8" rx="0.6" fill="#4b77bb"/><path fill-rule="evenodd" d="M3 10 H25 V36.2 H3 Z M6.9 12.5 V32.1 H9 V12.5 Z M13 12.5 V32.1 H15 V12.5 Z M18.9 12.5 V32.1 H21 V12.5 Z" fill="#4b77bb"/></svg>
<div class="r" style="left:496.0px;top:900.8px;width:1889.0px;height:70.1px;background:#ffffff;"></div>
<svg class="r" style="left:525.0px;top:929.3px;" width="17.0" height="24.0" viewBox="0 0 17 24" preserveAspectRatio="none"><path d="M2.8 3 L13.6 12 L2.8 21" fill="none" stroke="#4b77bb" stroke-width="4.4" stroke-linecap="round" stroke-linejoin="round"/></svg>
<div class="t" style="top:926.3px;font-size:24.5px;line-height:24.5px;color:#000;left:605.0px;">REPAIR</div>
<svg class="r" style="left:784.5px;top:923.8px;" width="38.0" height="38.0" viewBox="0 0 38 38" preserveAspectRatio="none"><circle cx="13.5" cy="14" r="11.4" fill="none" stroke="#4b77bb" stroke-width="3.7"/><path d="M23.7 28.4 L28.1 23.9 L36.5 31.8 L31.7 36.6 Z" fill="#4b77bb" stroke="#4b77bb" stroke-width="0.8" stroke-linejoin="round"/></svg>
<div class="t" style="top:926.3px;font-size:24.5px;line-height:24.5px;color:#000;left:847.0px;">Repaired</div>
<svg class="r" style="left:1288.0px;top:926.3px;" width="28.5" height="30.0" viewBox="0 0 28 30" preserveAspectRatio="none"><rect x="1.1" y="1" width="25.8" height="28" fill="none" stroke="#4b77bb" stroke-opacity="0.85" stroke-width="2.2"/><rect x="0" y="0" width="28" height="7.6" fill="#4b77bb"/><rect x="6" y="13.9" width="16" height="2" fill="#4b77bb" fill-opacity="0.8"/><rect x="6" y="17.9" width="16" height="2" fill="#4b77bb" fill-opacity="0.8"/><rect x="6" y="21.9" width="16" height="2" fill="#4b77bb" fill-opacity="0.8"/></svg>
<div class="t" style="top:925.8px;font-size:25px;line-height:25px;color:#000;right:1744.0px;">60</div>
<div class="t" style="top:925.8px;font-size:25px;line-height:25px;color:#000;right:1535.0px;">150.00</div>
<div class="t" style="top:925.8px;font-size:25px;line-height:25px;color:#000;right:1330.0px;">150.00</div>
<div class="t" style="top:926.3px;font-size:24.5px;line-height:24.5px;color:#000;letter-spacing:0.6px;left:2067.0px;">6600-800-800</div>
<svg class="r" style="left:2246.5px;top:923.8px;" width="38.0" height="38.0" viewBox="0 0 38 38" preserveAspectRatio="none"><circle cx="13.5" cy="14" r="11.4" fill="none" stroke="#4b77bb" stroke-width="3.7"/><path d="M23.7 28.4 L28.1 23.9 L36.5 31.8 L31.7 36.6 Z" fill="#4b77bb" stroke="#4b77bb" stroke-width="0.8" stroke-linejoin="round"/></svg>
<svg class="r" style="left:2312.5px;top:923.3px;" width="28.0" height="37.0" viewBox="0 0 28 37" preserveAspectRatio="none"><rect x="7" y="0.5" width="13.8" height="3.6" rx="0.6" fill="#4b77bb"/><rect x="0.8" y="6.6" width="26.1" height="3.8" rx="0.6" fill="#4b77bb"/><path fill-rule="evenodd" d="M3 10 H25 V36.2 H3 Z M6.9 12.5 V32.1 H9 V12.5 Z M13 12.5 V32.1 H15 V12.5 Z M18.9 12.5 V32.1 H21 V12.5 Z" fill="#4b77bb"/></svg>
<div class="r" style="left:496.0px;top:970.8px;width:1889.0px;height:70.1px;background:#f6f6f6;"></div>
<svg class="r" style="left:525.0px;top:999.3px;" width="17.0" height="24.0" viewBox="0 0 17 24" preserveAspectRatio="none"><path d="M2.8 3 L13.6 12 L2.8 21" fill="none" stroke="#4b77bb" stroke-width="4.4" stroke-linecap="round" stroke-linejoin="round"/></svg>
<div class="t" style="top:996.3px;font-size:24.5px;line-height:24.5px;color:#000;left:605.0px;">SCRAP</div>
<svg class="r" style="left:784.5px;top:993.8px;" width="38.0" height="38.0" viewBox="0 0 38 38" preserveAspectRatio="none"><circle cx="13.5" cy="14" r="11.4" fill="none" stroke="#4b77bb" stroke-width="3.7"/><path d="M23.7 28.4 L28.1 23.9 L36.5 31.8 L31.7 36.6 Z" fill="#4b77bb" stroke="#4b77bb" stroke-width="0.8" stroke-linejoin="round"/></svg>
<div class="t" style="top:996.3px;font-size:24.5px;line-height:24.5px;color:#000;left:847.0px;">Scrappage</div>
<svg class="r" style="left:1288.0px;top:996.3px;" width="28.5" height="30.0" viewBox="0 0 28 30" preserveAspectRatio="none"><rect x="1.1" y="1" width="25.8" height="28" fill="none" stroke="#4b77bb" stroke-opacity="0.85" stroke-width="2.2"/><rect x="0" y="0" width="28" height="7.6" fill="#4b77bb"/><rect x="6" y="13.9" width="16" height="2" fill="#4b77bb" fill-opacity="0.8"/><rect x="6" y="17.9" width="16" height="2" fill="#4b77bb" fill-opacity="0.8"/><rect x="6" y="21.9" width="16" height="2" fill="#4b77bb" fill-opacity="0.8"/></svg>
<div class="t" style="top:995.8px;font-size:25px;line-height:25px;color:#000;right:1744.0px;">4</div>
<div class="t" style="top:995.8px;font-size:25px;line-height:25px;color:#000;right:1535.0px;">10.00</div>
<div class="t" style="top:995.8px;font-size:25px;line-height:25px;color:#000;right:1330.0px;">10.00</div>
<div class="t" style="top:996.3px;font-size:24.5px;line-height:24.5px;color:#000;letter-spacing:0.6px;left:2067.0px;">6600-800-800</div>
<svg class="r" style="left:2246.5px;top:993.8px;" width="38.0" height="38.0" viewBox="0 0 38 38" preserveAspectRatio="none"><circle cx="13.5" cy="14" r="11.4" fill="none" stroke="#4b77bb" stroke-width="3.7"/><path d="M23.7 28.4 L28.1 23.9 L36.5 31.8 L31.7 36.6 Z" fill="#4b77bb" stroke="#4b77bb" stroke-width="0.8" stroke-linejoin="round"/></svg>
<svg class="r" style="left:2312.5px;top:993.3px;" width="28.0" height="37.0" viewBox="0 0 28 37" preserveAspectRatio="none"><rect x="7" y="0.5" width="13.8" height="3.6" rx="0.6" fill="#4b77bb"/><rect x="0.8" y="6.6" width="26.1" height="3.8" rx="0.6" fill="#4b77bb"/><path fill-rule="evenodd" d="M3 10 H25 V36.2 H3 Z M6.9 12.5 V32.1 H9 V12.5 Z M13 12.5 V32.1 H15 V12.5 Z M18.9 12.5 V32.1 H21 V12.5 Z" fill="#4b77bb"/></svg>
<div class="r" style="left:520.0px;top:1065.0px;width:186.0px;height:84.0px;background:#4e79bb;"></div>
<div class="t" style="top:1093.6px;font-size:27px;line-height:27px;color:#fff;left:554.5px;">New Row</div>
<div class="r" style="left:496.0px;top:1193.0px;width:2708.0px;height:90.0px;background:#ebebeb;"></div>
<div class="r" style="left:496.0px;top:1282.0px;width:2708.0px;height:2.5px;background:#a3a3a3;"></div>
<div class="t" style="top:1227.5px;font-size:24.5px;line-height:24.5px;color:#161616;left:510.0px;">Inventory Balances</div>
<div class="r" style="left:746.6px;top:1193.0px;width:1.2px;height:89.0px;background:#d9d9d9;"></div>
<svg class="r" style="left:772.2px;top:1224.5px;" width="29.0" height="28.0" viewBox="0 0 29 28" preserveAspectRatio="none"><rect x="0.3" y="0.3" width="28" height="4.8" fill="#4b77bb"/><path d="M1.8 3.5 L12.2 14.5 V26.8 L15.5 23 M26.8 3.5 L17.2 13.5" fill="none" stroke="#4b77bb" stroke-width="2.7"/><path d="M15.5 12.3 H20 L23 15.3 L21.5 19.5 L15.5 21.5 Z" fill="#4b77bb"/></svg>
<div class="t" style="top:1227.8px;font-size:25px;line-height:25px;color:#2f5b8c;left:828.2px;text-decoration:underline;text-underline-offset:1.8px;text-decoration-thickness:1.2px;">Filter</div>
<svg class="r" style="left:924.2px;top:1229.0px;" width="13.0" height="16.0" viewBox="0 0 13 16" preserveAspectRatio="none"><path d="M2.2 1.8 L10.5 8 L2.2 14.2" fill="none" stroke="#96968a" stroke-width="2.3" stroke-linecap="round" stroke-linejoin="round"/></svg>
<svg class="r" style="left:971.7px;top:1223.0px;" width="34.4" height="34.4" viewBox="0 0 38 38" preserveAspectRatio="none"><circle cx="13.5" cy="14" r="11.4" fill="none" stroke="#d9d9d9" stroke-width="3.7"/><path d="M23.7 28.4 L28.1 23.9 L36.5 31.8 L31.7 36.6 Z" fill="#d9d9d9" stroke="#d9d9d9" stroke-width="0.8" stroke-linejoin="round"/></svg>
<div class="r" style="left:1034.2px;top:1193.0px;width:1.2px;height:89.0px;background:#d9d9d9;"></div>
<svg class="r" style="left:1058.2px;top:1223.0px;" width="32.0" height="31.0" viewBox="0 0 32 31" preserveAspectRatio="none"><path d="M1 1.5 H30 V4.5 L20.5 14 V17 L13 29 V14 L3 4.5 Z" fill="none" stroke="#d9d9d9" stroke-width="2.6"/><circle cx="23" cy="22" r="8.5" fill="#d9d9d9"/><path d="M19.5 18.5 L26.5 25.5 M26.5 18.5 L19.5 25.5" stroke="#ececec" stroke-width="2"/></svg>
<div class="r" style="left:1120.6px;top:1193.0px;width:1.2px;height:89.0px;background:#d9d9d9;"></div>
<svg class="r" style="left:1174.2px;top:1223.0px;" width="32.0" height="32.0" viewBox="0 0 32 32" preserveAspectRatio="none"><g transform="rotate(180 16 16)"><rect x="13.3" y="1" width="5.4" height="26" fill="#d9d9d9"/><path d="M3 15 L16 28.5 L29 15" fill="none" stroke="#d9d9d9" stroke-width="5.4"/></g></svg>
<svg class="r" style="left:1264.2px;top:1223.0px;" width="32.0" height="32.0" viewBox="0 0 32 32" preserveAspectRatio="none"><g transform="rotate(0 16 16)"><rect x="13.3" y="1" width="5.4" height="26" fill="#4b77bb"/><path d="M3 15 L16 28.5 L29 15" fill="none" stroke="#4b77bb" stroke-width="5.4"/></g></svg>
<div class="r" style="left:1326.4px;top:1193.0px;width:1.2px;height:89.0px;background:#d9d9d9;"></div>
<svg class="r" style="left:1350.7px;top:1223.0px;" width="32.0" height="32.0" viewBox="0 0 32 32" preserveAspectRatio="none"><g transform="rotate(90 16 16)"><rect x="13.3" y="1" width="5.4" height="26" fill="#d9d9d9"/><path d="M3 15 L16 28.5 L29 15" fill="none" stroke="#d9d9d9" stroke-width="5.4"/></g></svg>
<div class="t" style="top:1227.3px;font-size:25px;line-height:25px;color:#161616;letter-spacing:1.5px;left:1407.2px;">1&nbsp;&nbsp;-&nbsp;&nbsp;4&nbsp;&nbsp;of&nbsp;&nbsp;4</div>
<svg class="r" style="left:1584.2px;top:1223.0px;" width="32.0" height="32.0" viewBox="0 0 32 32" preserveAspectRatio="none"><g transform="rotate(-90 16 16)"><rect x="13.3" y="1" width="5.4" height="26" fill="#d9d9d9"/><path d="M3 15 L16 28.5 L29 15" fill="none" stroke="#d9d9d9" stroke-width="5.4"/></g></svg>
<svg class="r" style="left:3057.5px;top:1221.6px;" width="33.0" height="33.0" viewBox="0 0 33 33" preserveAspectRatio="none"><rect x="14.8" y="0" width="3.4" height="21" fill="#4b77bb"/><path d="M7 12.5 L16.5 22 L26 12.5" fill="none" stroke="#4b77bb" stroke-width="3.4"/><path d="M2 18.5 V31 H31 V18.5" fill="none" stroke="#4b77bb" stroke-width="3.6"/></svg>
<div class="r" style="left:3136.1px;top:1193.0px;width:1.2px;height:89.0px;background:#d9d9d9;"></div>
<svg class="r" style="left:3159.8px;top:1222.2px;" width="32.0" height="30.0" viewBox="0 0 32 30" preserveAspectRatio="none"><rect x="0" y="0" width="32" height="30" fill="#4b77bb"/><path d="M14 12 L5.5 20.5 M4.5 13.5 V24 H15" fill="none" stroke="#fff" stroke-width="2.4"/></svg>
<div class="r" style="left:496.0px;top:1294.0px;width:2708.0px;height:90.2px;background:#f8f8f8;"></div>
<div class="t" style="top:1328.2px;font-size:24px;line-height:24px;color:#3d3d3d;letter-spacing:1.95px;left:602.5px;-webkit-text-stroke:0.9px #3d3d3d;">Bin</div>
<div class="t" style="top:1328.2px;font-size:24px;line-height:24px;color:#3d3d3d;letter-spacing:1.95px;left:789.5px;-webkit-text-stroke:0.9px #3d3d3d;">Lot</div>
<div class="t" style="top:1328.2px;font-size:24px;line-height:24px;color:#3d3d3d;letter-spacing:1.95px;left:1031.0px;-webkit-text-stroke:0.9px #3d3d3d;">Condition Code</div>
<div class="t" style="top:1328.2px;font-size:24px;line-height:24px;color:#3d3d3d;letter-spacing:1.95px;left:1273.0px;-webkit-text-stroke:0.9px #3d3d3d;">Current Balance</div>
<div class="t" style="top:1328.2px;font-size:24px;line-height:24px;color:#3d3d3d;letter-spacing:1.95px;left:1504.5px;-webkit-text-stroke:0.9px #3d3d3d;">Staged Balance</div>
<div class="t" style="top:1328.2px;font-size:24px;line-height:24px;color:#3d3d3d;letter-spacing:1.95px;left:1727.5px;-webkit-text-stroke:0.9px #3d3d3d;">Staging Bin?</div>
<div class="t" style="top:1328.2px;font-size:24px;line-height:24px;color:#3d3d3d;letter-spacing:1.95px;left:1898.5px;-webkit-text-stroke:0.9px #3d3d3d;">Physical Count</div>
<div class="t" style="top:1328.2px;font-size:24px;line-height:24px;color:#3d3d3d;letter-spacing:1.95px;left:2113.0px;-webkit-text-stroke:0.9px #3d3d3d;">Physical Count Date</div>
<div class="t" style="top:1328.2px;font-size:24px;line-height:24px;color:#3d3d3d;letter-spacing:1.95px;left:2480.5px;-webkit-text-stroke:0.9px #3d3d3d;">Reconciled?</div>
<div class="t" style="top:1328.2px;font-size:24px;line-height:24px;color:#3d3d3d;letter-spacing:1.95px;left:2645.5px;-webkit-text-stroke:0.9px #3d3d3d;">Shelf Life (Days)</div>
<div class="t" style="top:1328.2px;font-size:24px;line-height:24px;color:#3d3d3d;letter-spacing:1.95px;left:2882.0px;-webkit-text-stroke:0.9px #3d3d3d;">Expiration Date</div>
<div class="r" style="left:496.0px;top:1383.8px;width:2708.0px;height:70.1px;background:#e0eff7;"></div>
<svg class="r" style="left:525.0px;top:1412.3px;" width="17.0" height="24.0" viewBox="0 0 17 24" preserveAspectRatio="none"><path d="M2.8 3 L13.6 12 L2.8 21" fill="none" stroke="#4b77bb" stroke-width="4.4" stroke-linecap="round" stroke-linejoin="round"/></svg>
<svg class="r" style="left:970.5px;top:1406.8px;" width="38.0" height="38.0" viewBox="0 0 38 38" preserveAspectRatio="none"><circle cx="13.5" cy="14" r="11.4" fill="none" stroke="#4b77bb" stroke-width="3.7"/><path d="M23.7 28.4 L28.1 23.9 L36.5 31.8 L31.7 36.6 Z" fill="#4b77bb" stroke="#4b77bb" stroke-width="0.8" stroke-linejoin="round"/></svg>
<div class="t" style="top:1408.6px;font-size:24.5px;line-height:24.5px;color:#000;left:1029.0px;">SCRAP</div>
<svg class="r" style="left:1212.7px;top:1406.8px;" width="38.0" height="38.0" viewBox="0 0 38 38" preserveAspectRatio="none"><circle cx="13.5" cy="14" r="11.4" fill="none" stroke="#4b77bb" stroke-width="3.7"/><path d="M23.7 28.4 L28.1 23.9 L36.5 31.8 L31.7 36.6 Z" fill="#4b77bb" stroke="#4b77bb" stroke-width="0.8" stroke-linejoin="round"/></svg>
<div class="t" style="top:1408.1px;font-size:25px;line-height:25px;color:#000;right:1896.0px;">1.00</div>
<div class="t" style="top:1408.1px;font-size:25px;line-height:25px;color:#000;right:1673.0px;">0.00</div>
<svg class="r" style="left:1723.2px;top:1408.0px;" width="36.0" height="36.0" viewBox="0 0 36 36" preserveAspectRatio="none"><rect x="1" y="1" width="34" height="34" fill="#e1e1e1" stroke="#9c9c9c" stroke-width="2"/></svg>
<div class="t" style="top:1408.1px;font-size:25px;line-height:25px;color:#000;right:1288.0px;">1.00</div>
<div class="t" style="top:1408.6px;font-size:24.5px;line-height:24.5px;color:#000;letter-spacing:0.75px;left:2110.5px;">04/08/20 16:19</div>
<svg class="r" style="left:2423.0px;top:1407.3px;" width="36.0" height="34.0" viewBox="0 0 36 34" preserveAspectRatio="none"><rect x="7" y="0" width="3.5" height="5" fill="#4b77bb"/><rect x="25.5" y="0" width="3.5" height="5" fill="#4b77bb"/><rect x="0" y="4" width="36" height="30" fill="#4b77bb"/><rect x="4.0" y="10.0" width="3.6" height="7" fill="#fff"/><rect x="12.2" y="10.0" width="3.6" height="7" fill="#fff"/><rect x="20.4" y="10.0" width="3.6" height="7" fill="#fff"/><rect x="28.6" y="10.0" width="3.6" height="7" fill="#fff"/><rect x="4.0" y="21.5" width="3.6" height="7" fill="#fff"/><rect x="12.2" y="21.5" width="3.6" height="7" fill="#fff"/><rect x="20.4" y="21.5" width="3.6" height="7" fill="#fff"/><rect x="28.6" y="21.5" width="3.6" height="7" fill="#fff"/><circle cx="27" cy="24.8" r="7" fill="#eff2f6"/><path d="M23.6 23.2 L26 25.8 L30.4 20.6" fill="none" stroke="#86a2d2" stroke-width="1.6"/></svg>
<svg class="r" style="left:2475.0px;top:1408.0px;" width="36.0" height="36.0" viewBox="0 0 36 36" preserveAspectRatio="none"><rect x="0" y="0" width="36" height="36" fill="#9a9a9a"/><path d="M6.5 18.5 L14 26 L30 10" fill="none" stroke="#fff" stroke-width="3.2"/></svg>
<svg class="r" style="left:3070.0px;top:1409.3px;" width="36.0" height="34.0" viewBox="0 0 36 34" preserveAspectRatio="none"><rect x="7" y="0" width="3.5" height="5" fill="#4b77bb"/><rect x="25.5" y="0" width="3.5" height="5" fill="#4b77bb"/><rect x="0" y="4" width="36" height="30" fill="#4b77bb"/><rect x="4.0" y="10.0" width="3.6" height="7" fill="#fff"/><rect x="12.2" y="10.0" width="3.6" height="7" fill="#fff"/><rect x="20.4" y="10.0" width="3.6" height="7" fill="#fff"/><rect x="28.6" y="10.0" width="3.6" height="7" fill="#fff"/><rect x="4.0" y="21.5" width="3.6" height="7" fill="#fff"/><rect x="12.2" y="21.5" width="3.6" height="7" fill="#fff"/><rect x="20.4" y="21.5" width="3.6" height="7" fill="#fff"/><rect x="28.6" y="21.5" width="3.6" height="7" fill="#fff"/></svg>
<svg class="r" style="left:3132.0px;top:1406.1px;" width="28.0" height="37.0" viewBox="0 0 28 37" preserveAspectRatio="none"><rect x="7" y="0.5" width="13.8" height="3.6" rx="0.6" fill="#4b77bb"/><rect x="0.8" y="6.6" width="26.1" height="3.8" rx="0.6" fill="#4b77bb"/><path fill-rule="evenodd" d="M3 10 H25 V36.2 H3 Z M6.9 12.5 V32.1 H9 V12.5 Z M13 12.5 V32.1 H15 V12.5 Z M18.9 12.5 V32.1 H21 V12.5 Z" fill="#4b77bb"/></svg>
<div class="r" style="left:598.0px;top:1441.8px;width:175.0px;height:2.3px;background:#d9d9d9;"></div>
<div class="r" style="left:785.0px;top:1441.8px;width:174.0px;height:2.3px;background:#d9d9d9;"></div>
<div class="r" style="left:1027.5px;top:1441.8px;width:173.5px;height:2.3px;background:#d9d9d9;"></div>
<div class="r" style="left:1291.0px;top:1441.8px;width:174.0px;height:2.3px;background:#d9d9d9;"></div>
<div class="r" style="left:1514.0px;top:1441.8px;width:174.0px;height:2.3px;background:#d9d9d9;"></div>
<div class="r" style="left:1899.3px;top:1441.8px;width:174.2px;height:2.3px;background:#d9d9d9;"></div>
<div class="r" style="left:2108.0px;top:1441.8px;width:296.0px;height:2.3px;background:#d9d9d9;"></div>
<div class="r" style="left:2668.0px;top:1441.8px;width:175.0px;height:2.3px;background:#d9d9d9;"></div>
<div class="r" style="left:2877.0px;top:1441.8px;width:174.0px;height:2.3px;background:#d9d9d9;"></div>
<div class="r" style="left:496.0px;top:1453.8px;width:2708.0px;height:70.1px;background:#f6f6f6;"></div>
<svg class="r" style="left:525.0px;top:1482.2px;" width="17.0" height="24.0" viewBox="0 0 17 24" preserveAspectRatio="none"><path d="M2.8 3 L13.6 12 L2.8 21" fill="none" stroke="#4b77bb" stroke-width="4.4" stroke-linecap="round" stroke-linejoin="round"/></svg>
<div class="t" style="top:1479.6px;font-size:24.5px;line-height:24.5px;color:#000;left:604.0px;">AB-6-New</div>
<svg class="r" style="left:970.5px;top:1476.8px;" width="38.0" height="38.0" viewBox="0 0 38 38" preserveAspectRatio="none"><circle cx="13.5" cy="14" r="11.4" fill="none" stroke="#4b77bb" stroke-width="3.7"/><path d="M23.7 28.4 L28.1 23.9 L36.5 31.8 L31.7 36.6 Z" fill="#4b77bb" stroke="#4b77bb" stroke-width="0.8" stroke-linejoin="round"/></svg>
<div class="t" style="top:1479.6px;font-size:24.5px;line-height:24.5px;color:#000;left:1033.0px;">NEW</div>
<svg class="r" style="left:1212.7px;top:1476.8px;" width="38.0" height="38.0" viewBox="0 0 38 38" preserveAspectRatio="none"><circle cx="13.5" cy="14" r="11.4" fill="none" stroke="#4b77bb" stroke-width="3.7"/><path d="M23.7 28.4 L28.1 23.9 L36.5 31.8 L31.7 36.6 Z" fill="#4b77bb" stroke="#4b77bb" stroke-width="0.8" stroke-linejoin="round"/></svg>
<div class="t" style="top:1479.2px;font-size:25px;line-height:25px;color:#000;right:1898.0px;">5.00</div>
<div class="t" style="top:1479.2px;font-size:25px;line-height:25px;color:#000;right:1675.0px;">0.00</div>
<svg class="r" style="left:1723.2px;top:1478.0px;" width="36.0" height="36.0" viewBox="0 0 36 36" preserveAspectRatio="none"><rect x="1" y="1" width="34" height="34" fill="#e1e1e1" stroke="#9c9c9c" stroke-width="2"/></svg>
<div class="t" style="top:1479.2px;font-size:25px;line-height:25px;color:#000;right:1289.5px;">5.00</div>
<div class="t" style="top:1479.6px;font-size:24.5px;line-height:24.5px;color:#000;letter-spacing:0.75px;left:2114.5px;">04/08/20 12:07</div>
<svg class="r" style="left:2423.0px;top:1477.2px;" width="36.0" height="34.0" viewBox="0 0 36 34" preserveAspectRatio="none"><rect x="7" y="0" width="3.5" height="5" fill="#4b77bb"/><rect x="25.5" y="0" width="3.5" height="5" fill="#4b77bb"/><rect x="0" y="4" width="36" height="30" fill="#4b77bb"/><rect x="4.0" y="10.0" width="3.6" height="7" fill="#fff"/><rect x="12.2" y="10.0" width="3.6" height="7" fill="#fff"/><rect x="20.4" y="10.0" width="3.6" height="7" fill="#fff"/><rect x="28.6" y="10.0" width="3.6" height="7" fill="#fff"/><rect x="4.0" y="21.5" width="3.6" height="7" fill="#fff"/><rect x="12.2" y="21.5" width="3.6" height="7" fill="#fff"/><rect x="20.4" y="21.5" width="3.6" height="7" fill="#fff"/><rect x="28.6" y="21.5" width="3.6" height="7" fill="#fff"/><circle cx="27" cy="24.8" r="7" fill="#eff2f6"/><path d="M23.6 23.2 L26 25.8 L30.4 20.6" fill="none" stroke="#86a2d2" stroke-width="1.6"/></svg>
<svg class="r" style="left:2475.0px;top:1478.0px;" width="36.0" height="36.0" viewBox="0 0 36 36" preserveAspectRatio="none"><rect x="0" y="0" width="36" height="36" fill="#9a9a9a"/><path d="M6.5 18.5 L14 26 L30 10" fill="none" stroke="#fff" stroke-width="3.2"/></svg>
<svg class="r" style="left:3070.0px;top:1479.2px;" width="36.0" height="34.0" viewBox="0 0 36 34" preserveAspectRatio="none"><rect x="7" y="0" width="3.5" height="5" fill="#4b77bb"/><rect x="25.5" y="0" width="3.5" height="5" fill="#4b77bb"/><rect x="0" y="4" width="36" height="30" fill="#4b77bb"/><rect x="4.0" y="10.0" width="3.6" height="7" fill="#fff"/><rect x="12.2" y="10.0" width="3.6" height="7" fill="#fff"/><rect x="20.4" y="10.0" width="3.6" height="7" fill="#fff"/><rect x="28.6" y="10.0" width="3.6" height="7" fill="#fff"/><rect x="4.0" y="21.5" width="3.6" height="7" fill="#fff"/><rect x="12.2" y="21.5" width="3.6" height="7" fill="#fff"/><rect x="20.4" y="21.5" width="3.6" height="7" fill="#fff"/><rect x="28.6" y="21.5" width="3.6" height="7" fill="#fff"/></svg>
<svg class="r" style="left:3132.0px;top:1476.0px;" width="28.0" height="37.0" viewBox="0 0 28 37" preserveAspectRatio="none"><rect x="7" y="0.5" width="13.8" height="3.6" rx="0.6" fill="#4b77bb"/><rect x="0.8" y="6.6" width="26.1" height="3.8" rx="0.6" fill="#4b77bb"/><path fill-rule="evenodd" d="M3 10 H25 V36.2 H3 Z M6.9 12.5 V32.1 H9 V12.5 Z M13 12.5 V32.1 H15 V12.5 Z M18.9 12.5 V32.1 H21 V12.5 Z" fill="#4b77bb"/></svg>
<div class="r" style="left:496.0px;top:1523.7px;width:2708.0px;height:70.1px;background:#ffffff;"></div>
<svg class="r" style="left:525.0px;top:1552.2px;" width="17.0" height="24.0" viewBox="0 0 17 24" preserveAspectRatio="none"><path d="M2.8 3 L13.6 12 L2.8 21" fill="none" stroke="#4b77bb" stroke-width="4.4" stroke-linecap="round" stroke-linejoin="round"/></svg>
<div class="t" style="top:1549.6px;font-size:24.5px;line-height:24.5px;color:#000;left:604.0px;">AB-6-Ref</div>
<svg class="r" style="left:970.5px;top:1546.7px;" width="38.0" height="38.0" viewBox="0 0 38 38" preserveAspectRatio="none"><circle cx="13.5" cy="14" r="11.4" fill="none" stroke="#4b77bb" stroke-width="3.7"/><path d="M23.7 28.4 L28.1 23.9 L36.5 31.8 L31.7 36.6 Z" fill="#4b77bb" stroke="#4b77bb" stroke-width="0.8" stroke-linejoin="round"/></svg>
<div class="t" style="top:1549.6px;font-size:24.5px;line-height:24.5px;color:#000;left:1033.0px;">REFURB</div>
<svg class="r" style="left:1212.7px;top:1546.7px;" width="38.0" height="38.0" viewBox="0 0 38 38" preserveAspectRatio="none"><circle cx="13.5" cy="14" r="11.4" fill="none" stroke="#4b77bb" stroke-width="3.7"/><path d="M23.7 28.4 L28.1 23.9 L36.5 31.8 L31.7 36.6 Z" fill="#4b77bb" stroke="#4b77bb" stroke-width="0.8" stroke-linejoin="round"/></svg>
<div class="t" style="top:1549.1px;font-size:25px;line-height:25px;color:#000;right:1898.0px;">0.00</div>
<div class="t" style="top:1549.1px;font-size:25px;line-height:25px;color:#000;right:1675.0px;">0.00</div>
<svg class="r" style="left:1723.2px;top:1547.9px;" width="36.0" height="36.0" viewBox="0 0 36 36" preserveAspectRatio="none"><rect x="1" y="1" width="34" height="34" fill="#e1e1e1" stroke="#9c9c9c" stroke-width="2"/></svg>
<div class="t" style="top:1549.1px;font-size:25px;line-height:25px;color:#000;right:1289.5px;">1.00</div>
<div class="t" style="top:1549.6px;font-size:24.5px;line-height:24.5px;color:#000;letter-spacing:0.75px;left:2114.5px;">04/08/20 12:53</div>
<svg class="r" style="left:2423.0px;top:1547.2px;" width="36.0" height="34.0" viewBox="0 0 36 34" preserveAspectRatio="none"><rect x="7" y="0" width="3.5" height="5" fill="#4b77bb"/><rect x="25.5" y="0" width="3.5" height="5" fill="#4b77bb"/><rect x="0" y="4" width="36" height="30" fill="#4b77bb"/><rect x="4.0" y="10.0" width="3.6" height="7" fill="#fff"/><rect x="12.2" y="10.0" width="3.6" height="7" fill="#fff"/><rect x="20.4" y="10.0" width="3.6" height="7" fill="#fff"/><rect x="28.6" y="10.0" width="3.6" height="7" fill="#fff"/><rect x="4.0" y="21.5" width="3.6" height="7" fill="#fff"/><rect x="12.2" y="21.5" width="3.6" height="7" fill="#fff"/><rect x="20.4" y="21.5" width="3.6" height="7" fill="#fff"/><rect x="28.6" y="21.5" width="3.6" height="7" fill="#fff"/><circle cx="27" cy="24.8" r="7" fill="#eff2f6"/><path d="M23.6 23.2 L26 25.8 L30.4 20.6" fill="none" stroke="#86a2d2" stroke-width="1.6"/></svg>
<svg class="r" style="left:2475.0px;top:1547.9px;" width="36.0" height="36.0" viewBox="0 0 36 36" preserveAspectRatio="none"><rect x="0" y="0" width="36" height="36" fill="#9a9a9a"/><path d="M6.5 18.5 L14 26 L30 10" fill="none" stroke="#fff" stroke-width="3.2"/></svg>
<svg class="r" style="left:3070.0px;top:1549.2px;" width="36.0" height="34.0" viewBox="0 0 36 34" preserveAspectRatio="none"><rect x="7" y="0" width="3.5" height="5" fill="#4b77bb"/><rect x="25.5" y="0" width="3.5" height="5" fill="#4b77bb"/><rect x="0" y="4" width="36" height="30" fill="#4b77bb"/><rect x="4.0" y="10.0" width="3.6" height="7" fill="#fff"/><rect x="12.2" y="10.0" width="3.6" height="7" fill="#fff"/><rect x="20.4" y="10.0" width="3.6" height="7" fill="#fff"/><rect x="28.6" y="10.0" width="3.6" height="7" fill="#fff"/><rect x="4.0" y="21.5" width="3.6" height="7" fill="#fff"/><rect x="12.2" y="21.5" width="3.6" height="7" fill="#fff"/><rect x="20.4" y="21.5" width="3.6" height="7" fill="#fff"/><rect x="28.6" y="21.5" width="3.6" height="7" fill="#fff"/></svg>
<svg class="r" style="left:3132.0px;top:1546.0px;" width="28.0" height="37.0" viewBox="0 0 28 37" preserveAspectRatio="none"><rect x="7" y="0.5" width="13.8" height="3.6" rx="0.6" fill="#4b77bb"/><rect x="0.8" y="6.6" width="26.1" height="3.8" rx="0.6" fill="#4b77bb"/><path fill-rule="evenodd" d="M3 10 H25 V36.2 H3 Z M6.9 12.5 V32.1 H9 V12.5 Z M13 12.5 V32.1 H15 V12.5 Z M18.9 12.5 V32.1 H21 V12.5 Z" fill="#4b77bb"/></svg>
<div class="r" style="left:496.0px;top:1593.7px;width:2708.0px;height:70.1px;background:#f6f6f6;"></div>
<svg class="r" style="left:525.0px;top:1622.2px;" width="17.0" height="24.0" viewBox="0 0 17 24" preserveAspectRatio="none"><path d="M2.8 3 L13.6 12 L2.8 21" fill="none" stroke="#4b77bb" stroke-width="4.4" stroke-linecap="round" stroke-linejoin="round"/></svg>
<div class="t" style="top:1619.5px;font-size:24.5px;line-height:24.5px;color:#000;left:604.0px;">AB-6-Rep</div>
<svg class="r" style="left:970.5px;top:1616.7px;" width="38.0" height="38.0" viewBox="0 0 38 38" preserveAspectRatio="none"><circle cx="13.5" cy="14" r="11.4" fill="none" stroke="#4b77bb" stroke-width="3.7"/><path d="M23.7 28.4 L28.1 23.9 L36.5 31.8 L31.7 36.6 Z" fill="#4b77bb" stroke="#4b77bb" stroke-width="0.8" stroke-linejoin="round"/></svg>
<div class="t" style="top:1619.5px;font-size:24.5px;line-height:24.5px;color:#000;left:1033.0px;">REPAIR</div>
<svg class="r" style="left:1212.7px;top:1616.7px;" width="38.0" height="38.0" viewBox="0 0 38 38" preserveAspectRatio="none"><circle cx="13.5" cy="14" r="11.4" fill="none" stroke="#4b77bb" stroke-width="3.7"/><path d="M23.7 28.4 L28.1 23.9 L36.5 31.8 L31.7 36.6 Z" fill="#4b77bb" stroke="#4b77bb" stroke-width="0.8" stroke-linejoin="round"/></svg>
<div class="t" style="top:1619.1px;font-size:25px;line-height:25px;color:#000;right:1898.0px;">0.00</div>
<div class="t" style="top:1619.1px;font-size:25px;line-height:25px;color:#000;right:1675.0px;">0.00</div>
<svg class="r" style="left:1723.2px;top:1617.9px;" width="36.0" height="36.0" viewBox="0 0 36 36" preserveAspectRatio="none"><rect x="1" y="1" width="34" height="34" fill="#e1e1e1" stroke="#9c9c9c" stroke-width="2"/></svg>
<div class="t" style="top:1619.1px;font-size:25px;line-height:25px;color:#000;right:1289.5px;">1.00</div>
<div class="t" style="top:1619.5px;font-size:24.5px;line-height:24.5px;color:#000;letter-spacing:0.75px;left:2114.5px;">04/08/20 12:54</div>
<svg class="r" style="left:2423.0px;top:1617.2px;" width="36.0" height="34.0" viewBox="0 0 36 34" preserveAspectRatio="none"><rect x="7" y="0" width="3.5" height="5" fill="#4b77bb"/><rect x="25.5" y="0" width="3.5" height="5" fill="#4b77bb"/><rect x="0" y="4" width="36" height="30" fill="#4b77bb"/><rect x="4.0" y="10.0" width="3.6" height="7" fill="#fff"/><rect x="12.2" y="10.0" width="3.6" height="7" fill="#fff"/><rect x="20.4" y="10.0" width="3.6" height="7" fill="#fff"/><rect x="28.6" y="10.0" width="3.6" height="7" fill="#fff"/><rect x="4.0" y="21.5" width="3.6" height="7" fill="#fff"/><rect x="12.2" y="21.5" width="3.6" height="7" fill="#fff"/><rect x="20.4" y="21.5" width="3.6" height="7" fill="#fff"/><rect x="28.6" y="21.5" width="3.6" height="7" fill="#fff"/><circle cx="27" cy="24.8" r="7" fill="#eff2f6"/><path d="M23.6 23.2 L26 25.8 L30.4 20.6" fill="none" stroke="#86a2d2" stroke-width="1.6"/></svg>
<svg class="r" style="left:2475.0px;top:1617.9px;" width="36.0" height="36.0" viewBox="0 0 36 36" preserveAspectRatio="none"><rect x="0" y="0" width="36" height="36" fill="#9a9a9a"/><path d="M6.5 18.5 L14 26 L30 10" fill="none" stroke="#fff" stroke-width="3.2"/></svg>
<svg class="r" style="left:3070.0px;top:1619.2px;" width="36.0" height="34.0" viewBox="0 0 36 34" preserveAspectRatio="none"><rect x="7" y="0" width="3.5" height="5" fill="#4b77bb"/><rect x="25.5" y="0" width="3.5" height="5" fill="#4b77bb"/><rect x="0" y="4" width="36" height="30" fill="#4b77bb"/><rect x="4.0" y="10.0" width="3.6" height="7" fill="#fff"/><rect x="12.2" y="10.0" width="3.6" height="7" fill="#fff"/><rect x="20.4" y="10.0" width="3.6" height="7" fill="#fff"/><rect x="28.6" y="10.0" width="3.6" height="7" fill="#fff"/><rect x="4.0" y="21.5" width="3.6" height="7" fill="#fff"/><rect x="12.2" y="21.5" width="3.6" height="7" fill="#fff"/><rect x="20.4" y="21.5" width="3.6" height="7" fill="#fff"/><rect x="28.6" y="21.5" width="3.6" height="7" fill="#fff"/></svg>
<svg class="r" style="left:3132.0px;top:1616.0px;" width="28.0" height="37.0" viewBox="0 0 28 37" preserveAspectRatio="none"><rect x="7" y="0.5" width="13.8" height="3.6" rx="0.6" fill="#4b77bb"/><rect x="0.8" y="6.6" width="26.1" height="3.8" rx="0.6" fill="#4b77bb"/><path fill-rule="evenodd" d="M3 10 H25 V36.2 H3 Z M6.9 12.5 V32.1 H9 V12.5 Z M13 12.5 V32.1 H15 V12.5 Z M18.9 12.5 V32.1 H21 V12.5 Z" fill="#4b77bb"/></svg>
<div class="r" style="left:520.0px;top:1687.8px;width:186.0px;height:84.0px;background:#4e79bb;"></div>
<div class="t" style="top:1716.4px;font-size:27px;line-height:27px;color:#fff;left:554.5px;">New Row</div>
<div class="r" style="left:0;top:1742px;width:3356px;height:84px;background:linear-gradient(to bottom, rgba(0,0,0,0) 0%, rgba(0,0,0,0.012) 40%, rgba(0,0,0,0.04) 75%, rgba(0,0,0,0.075) 100%);pointer-events:none"></div>
<div class="r" style="left:3216px;top:1706px;width:140px;height:120px;background:radial-gradient(ellipse 140px 120px at 100% 100%, rgba(255,255,255,0.85) 0%, rgba(255,255,255,0.5) 45%, rgba(255,255,255,0) 100%);pointer-events:none"></div>
<svg class="r" style="left:0.0px;top:1819.0px;" width="7.0" height="7.0" viewBox="0 0 7 7" preserveAspectRatio="none"><path d="M0 0 V7 H7 A7 7 0 0 1 0 0 Z" fill="#2a1634"/></svg>
</body></html>
